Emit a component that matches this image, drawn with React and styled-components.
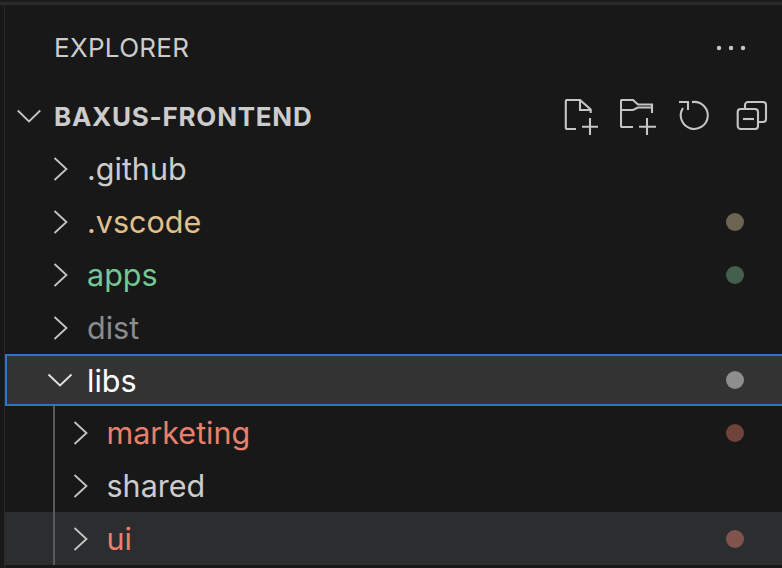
import React from "react";
import styled, { createGlobalStyle } from "styled-components";

const Global = createGlobalStyle`
  html, body { margin: 0; padding: 0; background: #181818; }
  #root { width: 782px; height: 568px; overflow: hidden; }
`;

const Window = styled.div`
  width: 782px;
  height: 568px;
  box-sizing: border-box;
  background: #181818;
  border-top: 2px solid #1c1c1c;
  font-family: Inter, "Noto Sans", sans-serif;
  display: flex;
  flex-direction: column;
  overflow: hidden;
`;

const TopLine = styled.div`
  height: 3px;
  flex: none;
  background: #2a2a2a;
`;

const Sidebar = styled.div`
  flex: 1;
  margin-left: 4px;
  border-left: 1px solid #2a2a2a;
  display: flex;
  flex-direction: column;
  min-height: 0;
`;

const TitleBar = styled.div`
  height: 85px;
  flex: none;
  box-sizing: border-box;
  padding: 0 36px 0 49px;
  display: flex;
  align-items: center;
  justify-content: space-between;
`;

const Title = styled.span`
  font-size: 26px;
  color: #cccccc;
  letter-spacing: 0.3px;
`;

const SectionHeader = styled.div`
  height: 52px;
  flex: none;
  display: flex;
  align-items: center;
  padding-left: 12px;
  padding-right: 12px;
`;

const SectionName = styled.span`
  font-size: 26px;
  font-weight: 700;
  color: #cccccc;
  letter-spacing: 0.75px;
  margin-left: 13px;
  flex: 1;
`;

const Actions = styled.div`
  display: flex;
  align-items: center;
  gap: 21px;
  margin-top: 2px;
`;

const Row = styled.div`
  height: ${(p) => (p.$active ? 52 : 53)}px;
  box-sizing: border-box;
  flex: none;
  display: flex;
  align-items: center;
  position: relative;
  padding-left: ${(p) => 42 + p.$level * 19.5}px;
  padding-right: 38px;
  background: ${(p) => (p.$active ? "#333333" : p.$hover ? "#2c2d2f" : "transparent")};
  border: ${(p) => (p.$active ? "2px solid #3272c4" : "none")};
  border-right: none;
  ${(p) => p.$active && "padding-left: 40px;"}
`;

const Guide = styled.div`
  position: absolute;
  left: 48px;
  top: 0;
  bottom: 0;
  width: 2px;
  background: #5a5a5a;
`;

const Label = styled.span`
  flex: 1;
  margin-left: 14px;
  font-size: 30.5px;
  color: ${(p) => p.$color};
`;

const Dot = styled.span`
  width: 18px;
  height: 18px;
  border-radius: 50%;
  background: ${(p) => p.$color};
`;

const Chevron = ({ open }) => (
  <svg width="26" height="24" viewBox="0 0 26 24" fill="none" stroke={open ? "#e6e6e6" : "#c5c5c5"} strokeWidth="1.8">
    {open ? <path d="M1.5 6.5 L13 17.5 L24.5 6.5" /> : <path d="M7.5 1 L19.5 12 L7.5 23" />}
  </svg>
);

const Icon = ({ children }) => (
  <svg width="36" height="37" viewBox="0 0 36 37" fill="none" stroke="#c5c5c5" strokeWidth="2.1">
    {children}
  </svg>
);

const rows = [
  { name: ".github", color: "#cccccc", level: 0 },
  { name: ".vscode", color: "#e2c08d", level: 0, dot: "#6d6351" },
  { name: "apps", color: "#73c991", level: 0, dot: "#43604c" },
  { name: "dist", color: "#8c8c8c", level: 0 },
  { name: "libs", color: "#ffffff", level: 0, dot: "#8e8e8e", active: true, open: true },
  { name: "marketing", color: "#e8806c", level: 1, dot: "#6f423a", guide: true },
  { name: "shared", color: "#cccccc", level: 1, guide: true },
  { name: "ui", color: "#e8806c", level: 1, dot: "#80544d", hover: true, guide: true },
];

export default function App() {
  return (
    <Window>
      <Global />
      <TopLine />
      <Sidebar>
        <TitleBar>
          <Title>EXPLORER</Title>
          <svg width="30" height="6" viewBox="0 0 30 6" fill="#c5c5c5">
            <circle cx="3" cy="3" r="2.2" />
            <circle cx="15" cy="3" r="2.2" />
            <circle cx="27" cy="3" r="2.2" />
          </svg>
        </TitleBar>
        <SectionHeader>
          <svg width="24" height="14" viewBox="0 0 24 14" fill="none" stroke="#c5c5c5" strokeWidth="1.8">
            <path d="M0.8 1.5 L12 12.5 L23.2 1.5" />
          </svg>
          <SectionName>BAXUS-FRONTEND</SectionName>
          <Actions>
            <Icon>
              <path d="M13 30 H4 a1.2 1.2 0 0 1 -1.2-1.2 V2.2 a1.2 1.2 0 0 1 1.2-1.2 H17 L27.7 10.5 V14" />
              <path d="M17 1 V11 H27.7" />
              <path d="M27 19 V36 M19 27.7 H35" />
            </Icon>
            <Icon>
              <path d="M13 28 H2 a1 1 0 0 1-1-1 V2 a1 1 0 0 1 1-1 H13 L18 5.5 H32 V14" />
              <path d="M1 11 H13 L18 8.5 H32" />
              <path d="M27 19 V36 M19 27.7 H36" />
            </Icon>
            <Icon>
              <path d="M15 3.1 A13.5 13.5 0 1 1 6 9" />
              <path d="M2 3 H11 V11" />
            </Icon>
            <Icon>
              <rect x="3.7" y="10" width="20.3" height="20" rx="3" />
              <path d="M11 10 V6 a3 3 0 0 1 3-3 H29 a3 3 0 0 1 3 3 V20 a3 3 0 0 1-3 3 H24" />
              <path d="M9 20 H20" />
            </Icon>
          </Actions>
        </SectionHeader>
        {rows.map((r) => (
          <Row key={r.name} $level={r.level} $active={r.active} $hover={r.hover}>
            {r.guide && <Guide />}
            <Chevron open={r.open} />
            <Label $color={r.color}>{r.name}</Label>
            {r.dot && <Dot $color={r.dot} />}
          </Row>
        ))}
      </Sidebar>
    </Window>
  );
}
